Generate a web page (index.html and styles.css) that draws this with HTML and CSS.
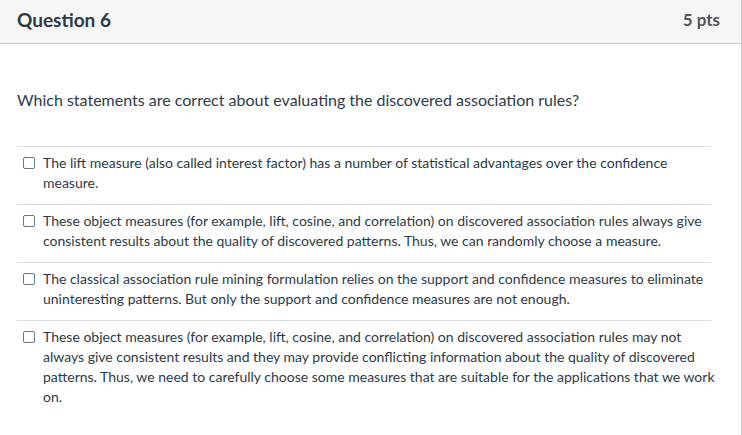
FILE: index.html
```html
<!DOCTYPE html>
<html lang="en">
<head>
    <meta charset="UTF-8">
    <title>Question 6</title>
    <link rel="stylesheet" href="styles.css">
</head>
<body>
    <div class="question">
        <div class="question-header">
            <h2 class="question-title">Question 6</h2>
            <span class="question-points">5 pts</span>
        </div>
        <div class="question-body">
            <p class="question-text">Which statements are correct about evaluating the discovered association rules?</p>
            <div class="answers">
                <label class="answer">
                    <input type="checkbox" class="answer-check">
                    <span class="answer-text">The lift measure (also called interest factor) has a number of statistical advantages over the confidence measure.</span>
                </label>
                <label class="answer">
                    <input type="checkbox" class="answer-check">
                    <span class="answer-text">These object measures (for example, lift, cosine, and correlation) on discovered association rules always give consistent results about the quality of discovered patterns. Thus, we can randomly choose a measure.</span>
                </label>
                <label class="answer">
                    <input type="checkbox" class="answer-check">
                    <span class="answer-text">The classical association rule mining formulation relies on the support and confidence measures to eliminate uninteresting patterns. But only the support and confidence measures are not enough.</span>
                </label>
                <label class="answer">
                    <input type="checkbox" class="answer-check">
                    <span class="answer-text">These object measures (for example, lift, cosine, and correlation) on discovered association rules may not always give consistent results and they may provide conflicting information about the quality of discovered patterns. Thus, we need to carefully choose some measures that are suitable for the applications that we work on.</span>
                </label>
            </div>
        </div>
    </div>
</body>
</html>
```

FILE: styles.css
```css
/* quiz question */
body {
    font-family: Lato, "Open Sans", sans-serif;
    color: #2d3b45;
    margin: 0;
    background: #fff;
}
.question {
    width: 741px;
    height: 435px;
    border-right: 1px solid #c7cdd1;
}
.question-header {
    display: flex;
    justify-content: space-between;
    align-items: center;
    height: 39px;
    padding: 0 21px 4px 17px;
    background-color: #f5f5f5;
    border-bottom: 1px solid #c7cdd1;
    box-sizing: content-box;
}
.question-title {
    margin: 0;
    font-size: 19px;
    font-weight: 700;
    color: #2d3b45;
}
.question-points {
    font-size: 17px;
    font-weight: 700;
    color: #565656;
}
.question-body {
    padding: 44px 30px 0 17px;
}
.question-text {
    margin: 0 0 34px;
    font-size: 16px;
    line-height: 24px;
}
.answer {
    display: flex;
    align-items: flex-start;
    padding: 6px 0 11px 5px;
    border-top: 1px solid #dadde0;
    font-size: 14px;
    line-height: 20px;
}
.answer-check {
    appearance: none;
    flex-shrink: 0;
    width: 12px;
    height: 12px;
    margin: 4px 8px 0 1px;
    border: 1px solid #6b7780;
    border-radius: 2px;
    background: #fff;
}
.answer-text {
    margin-right: -8px;
    color: #2d3b45;
}
```
